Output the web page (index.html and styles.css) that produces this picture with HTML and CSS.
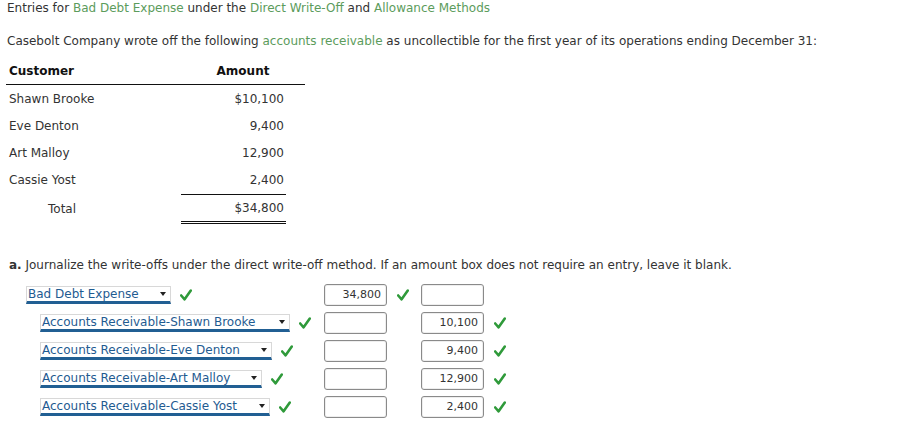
FILE: index.html
```html
<!DOCTYPE html>
<html>
<head>
<meta charset="utf-8">
<link rel="stylesheet" href="styles.css">
</head>
<body>
<div class="page">
  <p class="title">Entries for <span class="term">Bad Debt Expense</span> under the <span class="term">Direct Write-Off</span> and <span class="term">Allowance Methods</span></p>
  <p class="intro">Casebolt Company wrote off the following <span class="term">accounts receivable</span> as uncollectible for the first year of its operations ending December 31:</p>
  <table class="ar">
    <thead>
      <tr><th class="c-name">Customer</th><th class="c-amt">Amount</th></tr>
    </thead>
    <tbody>
      <tr><td class="c-name">Shawn Brooke</td><td class="c-amt"><div class="amt">$10,100</div></td></tr>
      <tr><td class="c-name">Eve Denton</td><td class="c-amt"><div class="amt">9,400</div></td></tr>
      <tr><td class="c-name">Art Malloy</td><td class="c-amt"><div class="amt">12,900</div></td></tr>
      <tr><td class="c-name">Cassie Yost</td><td class="c-amt"><div class="amt">2,400</div></td></tr>
      <tr class="total"><td class="c-name total-label">Total</td><td class="c-amt"><div class="amt dbl">$34,800</div></td></tr>
    </tbody>
  </table>
  <p class="question"><b>a.</b> Journalize the write-offs under the direct write-off method. If an amount box does not require an entry, leave it blank.</p>
  <div class="journal">
    <div class="jrow">
      <div class="acct"><span class="sel" style="width:145px">Bad Debt Expense<i class="arrow"></i></span><svg class="check" viewBox="0 0 12 12"><path d="M1.2 6.5 L4.6 10.3 L10.8 1.5"/></svg></div>
      <div class="box">34,800</div><div class="chk-cell"><svg class="check" viewBox="0 0 12 12"><path d="M1.2 6.5 L4.6 10.3 L10.8 1.5"/></svg></div>
      <div class="box"></div><div class="chk-cell"></div>
    </div>
    <div class="jrow credit">
      <div class="acct"><span class="sel" style="width:250px">Accounts Receivable-Shawn Brooke<i class="arrow"></i></span><svg class="check" viewBox="0 0 12 12"><path d="M1.2 6.5 L4.6 10.3 L10.8 1.5"/></svg></div>
      <div class="box"></div><div class="chk-cell"></div>
      <div class="box">10,100</div><div class="chk-cell"><svg class="check" viewBox="0 0 12 12"><path d="M1.2 6.5 L4.6 10.3 L10.8 1.5"/></svg></div>
    </div>
    <div class="jrow credit">
      <div class="acct"><span class="sel" style="width:232px">Accounts Receivable-Eve Denton<i class="arrow"></i></span><svg class="check" viewBox="0 0 12 12"><path d="M1.2 6.5 L4.6 10.3 L10.8 1.5"/></svg></div>
      <div class="box"></div><div class="chk-cell"></div>
      <div class="box">9,400</div><div class="chk-cell"><svg class="check" viewBox="0 0 12 12"><path d="M1.2 6.5 L4.6 10.3 L10.8 1.5"/></svg></div>
    </div>
    <div class="jrow credit">
      <div class="acct"><span class="sel" style="width:222px">Accounts Receivable-Art Malloy<i class="arrow"></i></span><svg class="check" viewBox="0 0 12 12"><path d="M1.2 6.5 L4.6 10.3 L10.8 1.5"/></svg></div>
      <div class="box"></div><div class="chk-cell"></div>
      <div class="box">12,900</div><div class="chk-cell"><svg class="check" viewBox="0 0 12 12"><path d="M1.2 6.5 L4.6 10.3 L10.8 1.5"/></svg></div>
    </div>
    <div class="jrow credit">
      <div class="acct"><span class="sel" style="width:230px">Accounts Receivable-Cassie Yost<i class="arrow"></i></span><svg class="check" viewBox="0 0 12 12"><path d="M1.2 6.5 L4.6 10.3 L10.8 1.5"/></svg></div>
      <div class="box"></div><div class="chk-cell"></div>
      <div class="box">2,400</div><div class="chk-cell"><svg class="check" viewBox="0 0 12 12"><path d="M1.2 6.5 L4.6 10.3 L10.8 1.5"/></svg></div>
    </div>
  </div>
</div>
</body>
</html>
```
FILE: styles.css
```css
html, body {
  margin: 0;
  padding: 0;
  background: #fff;
}
body {
  font-family: "DejaVu Sans", Verdana, sans-serif;
  font-size: 12px;
  color: #333;
}
.page {
  padding: 0 7px;
}
p {
  margin: 0;
  line-height: 16px;
}
.term {
  color: #5c9c5c;
}
.intro {
  margin-top: 17px;
}
.ar {
  margin-top: 8px;
  margin-left: -1px;
  border-collapse: collapse;
  width: 299px;
}
.ar th {
  font-weight: bold;
  color: #111;
  height: 27px;
  padding: 0;
  border-bottom: 1.5px solid #111;
  vertical-align: middle;
}
.ar td {
  height: 27px;
  padding: 0;
  vertical-align: middle;
}
.c-name {
  text-align: left;
  padding-left: 3px !important;
}
.c-amt {
  width: 124px;
  text-align: center;
}
.amt {
  text-align: right;
  margin-right: 19px;
  padding-right: 2px;
}
.ar tr:nth-child(4) td {
  height: 28px;
}
.ar tr.total td {
  height: 28px;
}
.ar tr.total td.c-amt .amt {
  border-top: 1.5px solid #111;
  border-bottom: 3px double #111;
  height: 26px;
  line-height: 26px;
}
.total-label {
  padding-left: 42px !important;
}
.question {
  margin-top: 33px;
  margin-left: 2px;
}
.journal {
  margin-top: 8px;
  margin-left: 19px;
}
.jrow {
  display: flex;
  align-items: center;
  height: 28px;
}
.acct {
  width: 298px;
  display: flex;
  align-items: center;
}
.credit .acct {
  padding-left: 14px;
  width: 284px;
}
.sel {
  position: relative;
  display: inline-block;
  box-sizing: border-box;
  height: 18px;
  line-height: 14px;
  color: #1f5b91;
  border: 1px solid #d8d8d8;
  border-bottom: 3px solid #215f93;
  padding-left: 1px;
  white-space: nowrap;
}
.arrow {
  position: absolute;
  right: 4px;
  top: 5px;
  width: 0;
  height: 0;
  border-left: 3px solid transparent;
  border-right: 3px solid transparent;
  border-top: 4px solid #222;
}
.check {
  width: 12px;
  height: 12px;
  margin-left: 9px;
  fill: none;
  stroke: #2f9a3a;
  stroke-width: 2.6;
  stroke-linecap: round;
  stroke-linejoin: round;
}
.box {
  box-sizing: border-box;
  width: 63px;
  height: 22px;
  border: 1px solid #8a8a8a;
  border-radius: 3px;
  box-shadow: inset 0 0 0 1px #eee;
  text-align: right;
  padding-right: 5px;
  line-height: 20px;
  font-size: 11px;
  color: #333;
}
.chk-cell {
  width: 34px;
  display: flex;
  align-items: center;
}
.chk-cell .check {
  margin-left: 10px;
}
```
